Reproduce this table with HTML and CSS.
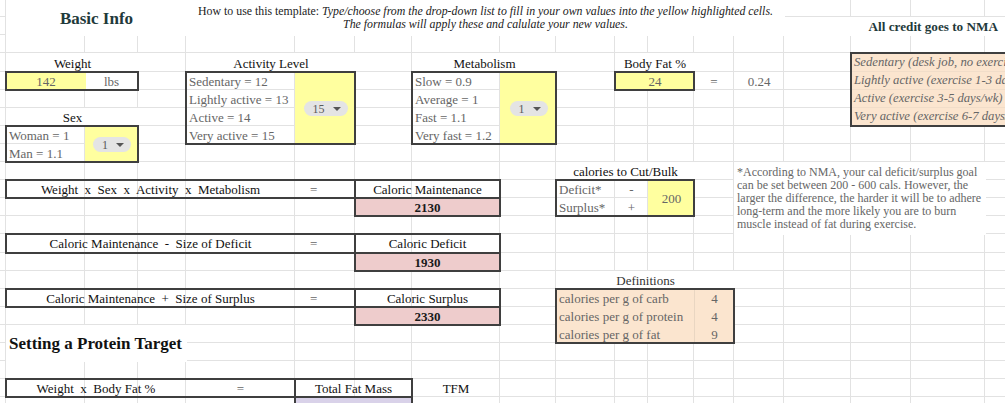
FILE: index.html
```html
<!DOCTYPE html>
<html>
<head>
<meta charset="utf-8">
<title>Basic Info</title>
<link rel="stylesheet" href="styles.css">
</head>
<body>
<div class="sheet">
  <div class="cell basic">Basic Info</div>
  <div class="cell howto"><span>How to use this template: <i>Type/choose from the drop-down list to fill in your own values into the yellow highlighted cells.</i><br><i>The formulas will apply these and calulate your new values.</i></span></div>
  <div class="cell credit">All credit goes to NMA</div>

  <div class="cell title t-weight">Weight</div>
  <div class="cell val yellow w-val">142</div>
  <div class="cell val w-unit">lbs</div>
  <div class="frame fr-weight"></div>

  <div class="cell title t-sex">Sex</div>
  <div class="cell lbl sex-1">Woman = 1</div>
  <div class="cell lbl sex-2">Man = 1.1</div>
  <div class="cell val yellow sex-sel"><span class="pill">1 <span class="caret"></span></span></div>
  <div class="frame fr-sex"></div>

  <div class="cell title t-act">Activity Level</div>
  <div class="cell lbl act-1">Sedentary = 12</div>
  <div class="cell lbl act-2">Lightly active = 13</div>
  <div class="cell lbl act-3">Active = 14</div>
  <div class="cell lbl act-4">Very active = 15</div>
  <div class="cell val yellow act-sel"><span class="pill">15 <span class="caret"></span></span></div>
  <div class="frame fr-act"></div>

  <div class="cell title t-met">Metabolism</div>
  <div class="cell lbl met-1">Slow = 0.9</div>
  <div class="cell lbl met-2">Average = 1</div>
  <div class="cell lbl met-3">Fast = 1.1</div>
  <div class="cell lbl met-4">Very fast = 1.2</div>
  <div class="cell val yellow met-sel"><span class="pill">1 <span class="caret"></span></span></div>
  <div class="frame fr-met"></div>

  <div class="cell title t-bf">Body Fat %</div>
  <div class="cell val yellow bf-val">24</div>
  <div class="frame fr-bf"></div>
  <div class="cell val bf-eq">=</div>
  <div class="cell val bf-res">0.24</div>

  <div class="cell desc desc-1">Sedentary (desk job, no exercise)</div>
  <div class="cell desc desc-2">Lightly active (exercise 1-3 days/wk)</div>
  <div class="cell desc desc-3">Active (exercise 3-5 days/wk)</div>
  <div class="cell desc desc-4">Very active (exercise 6-7 days/wk)</div>
  <div class="frame fr-desc"></div>

  <div class="cell title t-cut">calories to Cut/Bulk</div>
  <div class="cell lbl cut-1">Deficit*</div>
  <div class="cell val cut-1s">-</div>
  <div class="cell lbl cut-2">Surplus*</div>
  <div class="cell val cut-2s">+</div>
  <div class="cell val yellow cut-val">200</div>
  <div class="frame fr-cut"></div>

  <div class="cell note">*According to NMA, your cal deficit/surplus goal can be set between 200 - 600 cals. However, the larger the difference, the harder it will be to adhere long-term and the more likely you are to burn muscle instead of fat during exercise.</div>

  <div class="cell formula f-1">Weight&nbsp; x&nbsp; Sex&nbsp; x&nbsp; Activity&nbsp; x&nbsp; Metabolism</div>
  <div class="cell eq eq-1">=</div>
  <div class="frame fr-f1"></div>
  <div class="cell head r-1">Caloric Maintenance</div>
  <div class="cell result r-1v">2130</div>
  <div class="frame fr-r1"></div>
  <div class="frame fr-r1v"></div>

  <div class="cell formula f-2">Caloric Maintenance&nbsp; -&nbsp; Size of Deficit</div>
  <div class="cell eq eq-2">=</div>
  <div class="frame fr-f2"></div>
  <div class="cell head r-2">Caloric Deficit</div>
  <div class="cell result r-2v">1930</div>
  <div class="frame fr-r2"></div>
  <div class="frame fr-r2v"></div>

  <div class="cell title t-def">Definitions</div>
  <div class="cell def def-1">calories per g of carb</div>
  <div class="cell def defv defv-1">4</div>
  <div class="cell def def-2">calories per g of protein</div>
  <div class="cell def defv defv-2">4</div>
  <div class="cell def def-3">calories per g of fat</div>
  <div class="cell def defv defv-3">9</div>
  <div class="frame fr-def"></div>

  <div class="cell formula f-3">Caloric Maintenance&nbsp; +&nbsp; Size of Surplus</div>
  <div class="cell eq eq-3">=</div>
  <div class="frame fr-f3"></div>
  <div class="cell head r-3">Caloric Surplus</div>
  <div class="cell result r-3v">2330</div>
  <div class="frame fr-r3"></div>
  <div class="frame fr-r3v"></div>

  <div class="cell protein">Setting a Protein Target</div>

  <div class="cell formula f-4">Weight&nbsp; x&nbsp; Body Fat %</div>
  <div class="cell eq eq-4">=</div>
  <div class="frame fr-f4"></div>
  <div class="cell head r-4">Total Fat Mass</div>
  <div class="cell lavender r-4v"></div>
  <div class="frame fr-r4"></div>
  <div class="frame fr-r4v"></div>
  <div class="cell head tfm">TFM</div>
</div>
</body>
</html>
```

FILE: styles.css
```css
html, body {
  margin: 0;
  padding: 0;
  background: #ffffff;
}

body {
  font-family: "Liberation Serif", "Times New Roman", serif;
  font-size: 13px;
  color: #1a1a1a;
  overflow: hidden;
}

.sheet {
  position: relative;
  width: 1005px;
  height: 403px;
  overflow: hidden;
  display: grid;
  grid-template-columns: 6px 79px 53px 48px 109px 60px 57px 88px 56px 59px 33px 46px 40px 50px 67px 60px 74px 20px;
  grid-template-rows: 17px 18px 18px 19px 18px 18px 18px 18px 18px 18px 18px 18px 18px 19px 18px 18px 18px 18px 18px 18px 18px 18px 18px;
  --g: #e2e2e2;
  background:
    linear-gradient(var(--g), var(--g)) 5px 0 / 1px 100% no-repeat,
    linear-gradient(var(--g), var(--g)) 84px 0 / 1px 100% no-repeat,
    linear-gradient(var(--g), var(--g)) 137px 0 / 1px 100% no-repeat,
    linear-gradient(var(--g), var(--g)) 185px 0 / 1px 100% no-repeat,
    linear-gradient(var(--g), var(--g)) 294px 0 / 1px 100% no-repeat,
    linear-gradient(var(--g), var(--g)) 354px 0 / 1px 100% no-repeat,
    linear-gradient(var(--g), var(--g)) 411px 0 / 1px 100% no-repeat,
    linear-gradient(var(--g), var(--g)) 499px 0 / 1px 100% no-repeat,
    linear-gradient(var(--g), var(--g)) 555px 0 / 1px 100% no-repeat,
    linear-gradient(var(--g), var(--g)) 614px 0 / 1px 100% no-repeat,
    linear-gradient(var(--g), var(--g)) 647px 0 / 1px 100% no-repeat,
    linear-gradient(var(--g), var(--g)) 693px 0 / 1px 100% no-repeat,
    linear-gradient(var(--g), var(--g)) 733px 0 / 1px 100% no-repeat,
    linear-gradient(var(--g), var(--g)) 783px 0 / 1px 100% no-repeat,
    linear-gradient(var(--g), var(--g)) 850px 0 / 1px 100% no-repeat,
    linear-gradient(var(--g), var(--g)) 910px 0 / 1px 100% no-repeat,
    linear-gradient(var(--g), var(--g)) 984px 0 / 1px 100% no-repeat,
    linear-gradient(var(--g), var(--g)) 0 16px / 100% 1px no-repeat,
    linear-gradient(var(--g), var(--g)) 0 34px / 100% 1px no-repeat,
    linear-gradient(var(--g), var(--g)) 0 52px / 100% 1px no-repeat,
    linear-gradient(var(--g), var(--g)) 0 71px / 100% 1px no-repeat,
    linear-gradient(var(--g), var(--g)) 0 89px / 100% 1px no-repeat,
    linear-gradient(var(--g), var(--g)) 0 107px / 100% 1px no-repeat,
    linear-gradient(var(--g), var(--g)) 0 125px / 100% 1px no-repeat,
    linear-gradient(var(--g), var(--g)) 0 143px / 100% 1px no-repeat,
    linear-gradient(var(--g), var(--g)) 0 161px / 100% 1px no-repeat,
    linear-gradient(var(--g), var(--g)) 0 179px / 100% 1px no-repeat,
    linear-gradient(var(--g), var(--g)) 0 197px / 100% 1px no-repeat,
    linear-gradient(var(--g), var(--g)) 0 215px / 100% 1px no-repeat,
    linear-gradient(var(--g), var(--g)) 0 233px / 100% 1px no-repeat,
    linear-gradient(var(--g), var(--g)) 0 252px / 100% 1px no-repeat,
    linear-gradient(var(--g), var(--g)) 0 270px / 100% 1px no-repeat,
    linear-gradient(var(--g), var(--g)) 0 288px / 100% 1px no-repeat,
    linear-gradient(var(--g), var(--g)) 0 306px / 100% 1px no-repeat,
    linear-gradient(var(--g), var(--g)) 0 324px / 100% 1px no-repeat,
    linear-gradient(var(--g), var(--g)) 0 342px / 100% 1px no-repeat,
    linear-gradient(var(--g), var(--g)) 0 360px / 100% 1px no-repeat,
    linear-gradient(var(--g), var(--g)) 0 378px / 100% 1px no-repeat,
    linear-gradient(var(--g), var(--g)) 0 396px / 100% 1px no-repeat,
    #ffffff;
}

/* generic cell */
.cell {
  display: flex;
  align-items: center;
  justify-content: center;
  white-space: nowrap;
  overflow: hidden;
  min-width: 0;
  line-height: 1;
  z-index: 1;
}

.frame {
  border: 2px solid #3f3f3f;
  margin: -1px;
  z-index: 3;
  pointer-events: none;
}

.title {
  background: #ffffff;
  color: #111111;
  margin: 0 -1px -1px 0;
}

.lbl {
  justify-content: flex-start;
  padding-left: 3px;
  color: #666666;
}

.val {
  color: #666666;
}

.yellow {
  background: #ffff9f;
  margin: 0 -1px -1px 0;
}

.pill {
  display: inline-flex;
  align-items: center;
  gap: 8px;
  height: 15px;
  padding: 0 7px 0 9px;
  border-radius: 8px;
  background: #e4e4e4;
  color: #5a5a5a;
  font-size: 12px;
}

.caret {
  width: 0;
  height: 0;
  border-left: 4px solid transparent;
  border-right: 4px solid transparent;
  border-top: 4px solid #555555;
}

/* header */
.basic {
  grid-column: 2 / 5;
  grid-row: 1 / 3;
  background: #ffffff;
  margin: 0 -1px -1px 0;
  font-size: 17px;
  font-weight: bold;
  color: #1f3a3b;
  padding-top: 1px;
}

.howto {
  grid-column: 5 / 15;
  grid-row: 1 / 3;
  background: #ffffff;
  margin: 0 -1px -1px 0;
  align-items: flex-start;
  padding-top: 5px;
  font-size: 11.85px;
  line-height: 12.5px;
  color: #222222;
  text-align: center;
  white-space: normal;
}

.credit {
  grid-column: 15 / 19;
  grid-row: 2 / 3;
  background: #ffffff;
  margin: 0 0 -1px -1px;
  justify-content: flex-end;
  padding-right: 7px;
  font-size: 13.2px;
  font-weight: bold;
  color: #1f3a3b;
}

/* weight */
.t-weight { grid-column: 2 / 4; grid-row: 4 / 5; }
.w-val { grid-column: 2 / 3; grid-row: 5 / 6; }
.w-unit { grid-column: 3 / 4; grid-row: 5 / 6; }
.fr-weight { grid-column: 2 / 4; grid-row: 5 / 6; }

/* sex */
.t-sex { grid-column: 2 / 4; grid-row: 7 / 8; }
.sex-1 { grid-column: 2 / 3; grid-row: 8 / 9; }
.sex-2 { grid-column: 2 / 3; grid-row: 9 / 10; }
.sex-sel { grid-column: 3 / 4; grid-row: 8 / 10; }
.fr-sex { grid-column: 2 / 4; grid-row: 8 / 10; }

/* activity */
.t-act { grid-column: 5 / 7; grid-row: 4 / 5; }
.act-1 { grid-column: 5 / 6; grid-row: 5 / 6; }
.act-2 { grid-column: 5 / 6; grid-row: 6 / 7; }
.act-3 { grid-column: 5 / 6; grid-row: 7 / 8; }
.act-4 { grid-column: 5 / 6; grid-row: 8 / 9; }
.act-sel { grid-column: 6 / 7; grid-row: 5 / 9; }
.fr-act { grid-column: 5 / 7; grid-row: 5 / 9; }

/* metabolism */
.t-met { grid-column: 8 / 10; grid-row: 4 / 5; }
.met-1 { grid-column: 8 / 9; grid-row: 5 / 6; }
.met-2 { grid-column: 8 / 9; grid-row: 6 / 7; }
.met-3 { grid-column: 8 / 9; grid-row: 7 / 8; }
.met-4 { grid-column: 8 / 9; grid-row: 8 / 9; }
.met-sel { grid-column: 9 / 10; grid-row: 5 / 9; }
.fr-met { grid-column: 8 / 10; grid-row: 5 / 9; }

/* body fat */
.t-bf { grid-column: 11 / 13; grid-row: 4 / 5; }
.bf-val { grid-column: 11 / 13; grid-row: 5 / 6; }
.fr-bf { grid-column: 11 / 13; grid-row: 5 / 6; }
.bf-eq { grid-column: 13 / 14; grid-row: 5 / 6; }
.bf-res { grid-column: 14 / 15; grid-row: 5 / 6; }

/* activity descriptions */
.desc {
  grid-column: 16 / 19;
  background: #fbe5cf;
  justify-content: flex-start;
  padding-left: 3px;
  font-size: 12.7px;
  font-style: italic;
  color: #666666;
  border-bottom: 1px solid #f1ddc9;
}
.desc-1 { grid-row: 4 / 5; }
.desc-2 { grid-row: 5 / 6; }
.desc-3 { grid-row: 6 / 7; }
.desc-4 { grid-row: 7 / 8; }
.fr-desc { grid-column: 16 / 19; grid-row: 4 / 8; border-right: 0; margin-right: 0; }

/* cut / bulk */
.t-cut { grid-column: 10 / 13; grid-row: 10 / 11; }
.cut-1 { grid-column: 10 / 11; grid-row: 11 / 12; }
.cut-1s { grid-column: 11 / 12; grid-row: 11 / 12; }
.cut-2 { grid-column: 10 / 11; grid-row: 12 / 13; }
.cut-2s { grid-column: 11 / 12; grid-row: 12 / 13; }
.cut-val { grid-column: 12 / 13; grid-row: 11 / 13; }
.fr-cut { grid-column: 10 / 13; grid-row: 11 / 13; }

.note {
  grid-column: 14 / 18;
  grid-row: 10 / 14;
  background: #ffffff;
  margin: 0 -1px -1px 0;
  align-items: flex-start;
  justify-content: flex-start;
  padding: 4px 4px 0 3px;
  white-space: normal;
  font-size: 12px;
  line-height: 13px;
  color: #666666;
}

/* formulas */
.formula {
  grid-column: 2 / 6;
  color: #111111;
}
.eq {
  grid-column: 6 / 7;
  justify-content: flex-start;
  padding-left: 15px;
  color: #666666;
}
.head {
  grid-column: 7 / 9;
  color: #111111;
}
.result {
  grid-column: 7 / 9;
  background: #eecccc;
  font-weight: bold;
  color: #1a1a1a;
}

.f-1, .eq-1, .r-1, .fr-f1, .fr-r1 { grid-row: 11 / 12; }
.r-1v, .fr-r1v { grid-row: 12 / 13; }
.fr-f1 { grid-column: 2 / 7; }
.fr-r1, .fr-r1v { grid-column: 7 / 9; }

.f-2, .eq-2, .r-2, .fr-f2, .fr-r2 { grid-row: 14 / 15; }
.r-2v, .fr-r2v { grid-row: 15 / 16; }
.fr-f2 { grid-column: 2 / 7; }
.fr-r2, .fr-r2v { grid-column: 7 / 9; }

.f-3, .eq-3, .r-3, .fr-f3, .fr-r3 { grid-row: 17 / 18; }
.r-3v, .fr-r3v { grid-row: 18 / 19; }
.fr-f3 { grid-column: 2 / 7; }
.fr-r3, .fr-r3v { grid-column: 7 / 9; }

/* definitions */
.t-def { grid-column: 10 / 14; grid-row: 16 / 17; color: #333333; }
.def {
  grid-column: 10 / 13;
  background: #fbe5cf;
  justify-content: flex-start;
  padding-left: 3px;
  color: #666666;
}
.defv {
  grid-column: 13 / 14;
  justify-content: center;
  padding-left: 0;
  border-left: 1px solid #e9d6c2;
}
.def-1, .defv-1 { grid-row: 17 / 18; }
.def-2, .defv-2 { grid-row: 18 / 19; }
.def-3, .defv-3 { grid-row: 19 / 20; }
.fr-def { grid-column: 10 / 14; grid-row: 17 / 20; }

/* protein */
.protein {
  grid-column: 2 / 5;
  grid-row: 19 / 21;
  background: #ffffff;
  margin: 0 -1px -1px 0;
  justify-content: flex-start;
  padding-left: 3px;
  font-size: 17px;
  font-weight: bold;
  color: #111111;
}

.f-4 { grid-column: 2 / 5; grid-row: 22 / 23; }
.eq-4 { grid-column: 5 / 6; grid-row: 22 / 23; justify-content: center; padding-left: 0; }
.fr-f4 { grid-column: 2 / 6; grid-row: 22 / 23; }
.r-4 { grid-column: 6 / 8; grid-row: 22 / 23; }
.r-4v { grid-column: 6 / 8; grid-row: 23 / 24; }
.lavender { background: #d9d2e9; }
.fr-r4 { grid-column: 6 / 8; grid-row: 22 / 23; }
.fr-r4v { grid-column: 6 / 8; grid-row: 23 / 24; }
.tfm { grid-column: 8 / 9; grid-row: 22 / 23; }
```
